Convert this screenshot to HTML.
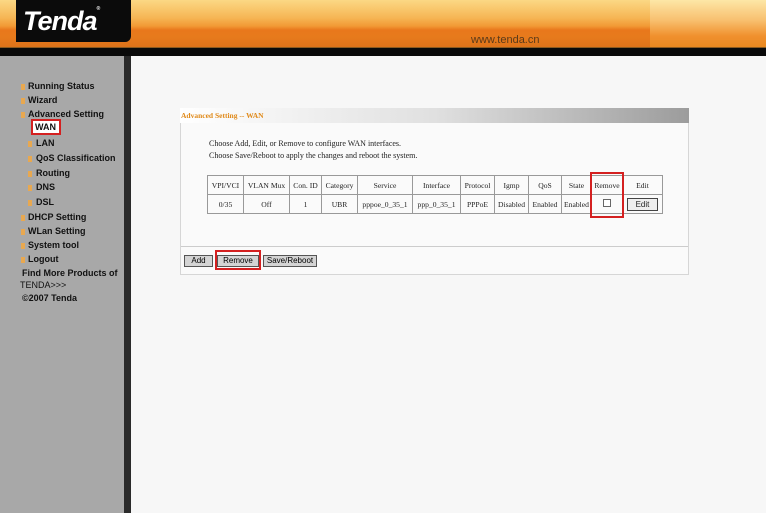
<!DOCTYPE html><html><head><style>
*{margin:0;padding:0;box-sizing:border-box}
body{width:766px;height:513px;overflow:hidden;background:#f7f7f7;font-family:"Liberation Serif",serif;position:relative}
.hdr{position:absolute;left:0;top:0;width:766px;height:56px;background:linear-gradient(#fbd884 0,#f6b554 18px,#f29a35 26px,#e9781c 30px,#e77a1c 66%,#d66d18 100%)}
.hdr2{position:absolute;left:650px;top:0;width:116px;height:48px;background:linear-gradient(#fde7a6 0,#f8c070 20px,#f0902e 36px,#e9881f 48px)}
.blk{position:absolute;left:0;top:47px;width:766px;height:9px;background:#0a0a0a;border-top:1px solid #8a5a20}
.logo{position:absolute;left:16px;top:0;width:115px;height:42px;background:#0b0b0b;border-radius:0 0 6px 0;color:#fff;font:italic bold 27px "Liberation Sans",sans-serif;letter-spacing:-1px;padding:6px 0 0 7px}
.url{position:absolute;left:471px;top:34px;font:11px "Liberation Sans",sans-serif;color:#5a3a1a}
.side{position:absolute;left:0;top:56px;width:124px;height:457px;background:#a8a8a8}
.bord{position:absolute;left:124px;top:56px;width:7px;height:457px;background:#2a2a2a}
.nav{position:absolute;font:bold 9px "Liberation Sans",sans-serif;color:#111;white-space:nowrap}
.dot{position:absolute;width:4px;height:6px;background:#e8a850}
.red{position:absolute;border:2px solid #d42020}
.panel{position:absolute;left:180px;top:108px;width:509px;height:167px;border:1px solid #d6d6d6;background:#fafafa}
.title{position:absolute;left:180px;top:108px;width:509px;height:15px;background:linear-gradient(90deg,#fff 0,#e0e0e0 50%,#9c9c9c 100%);font:bold 7.5px "Liberation Serif",serif;color:#e08a1a;padding:3px 0 0 1px}
.txt{position:absolute;left:209px;font-size:8px;color:#222}
table{position:absolute;left:207px;top:175px;border-collapse:collapse;font-size:7.6px;color:#222}
td{border:1px solid #999;text-align:center;padding:0;height:19px}
.btn{position:absolute;top:255px;height:12px;background:#d4d4d4;border:1px solid #555;font:8px "Liberation Sans",sans-serif;text-align:center;line-height:10px}
</style></head><body>
<div class="hdr"></div><div class="hdr2"></div><div class="blk"></div>
<div class="logo">Tenda<span style="font-size:5px;vertical-align:top">®</span></div>
<div class="url">www.tenda.cn</div>
<div class="side"></div><div class="bord"></div>
<div class="dot" style="left:21px;top:84px"></div><div class="nav" style="left:28px;top:81px">Running Status</div>
<div class="dot" style="left:21px;top:98px"></div><div class="nav" style="left:28px;top:95px">Wizard</div>
<div class="dot" style="left:21px;top:112px"></div><div class="nav" style="left:28px;top:109px">Advanced Setting</div>
<div class="red" style="left:31px;top:119px;width:30px;height:16px;background:#fff"></div><div class="nav" style="left:35px;top:122px">WAN</div>
<div class="dot" style="left:28px;top:141px"></div><div class="nav" style="left:36px;top:138px">LAN</div>
<div class="dot" style="left:28px;top:156px"></div><div class="nav" style="left:36px;top:153px">QoS Classification</div>
<div class="dot" style="left:28px;top:171px"></div><div class="nav" style="left:36px;top:168px">Routing</div>
<div class="dot" style="left:28px;top:185px"></div><div class="nav" style="left:36px;top:182px">DNS</div>
<div class="dot" style="left:28px;top:200px"></div><div class="nav" style="left:36px;top:197px">DSL</div>
<div class="dot" style="left:21px;top:215px"></div><div class="nav" style="left:28px;top:212px">DHCP Setting</div>
<div class="dot" style="left:21px;top:229px"></div><div class="nav" style="left:28px;top:226px">WLan Setting</div>
<div class="dot" style="left:21px;top:243px"></div><div class="nav" style="left:28px;top:240px">System tool</div>
<div class="dot" style="left:21px;top:257px"></div><div class="nav" style="left:28px;top:254px">Logout</div>
<div class="nav" style="left:22px;top:268px">Find More Products of</div>
<div class="nav" style="left:20px;top:280px;font-weight:normal">TENDA&gt;&gt;&gt;</div>
<div class="nav" style="left:22px;top:293px">©2007 Tenda</div>
<div class="panel"></div>
<div class="title">Advanced Setting -- WAN</div>
<div class="txt" style="top:139px">Choose Add, Edit, or Remove to configure WAN interfaces.</div>
<div class="txt" style="top:151px">Choose Save/Reboot to apply the changes and reboot the system.</div>
<table>
<tr><td style="width:36px">VPI/VCI</td><td style="width:46px">VLAN Mux</td><td style="width:32px">Con. ID</td><td style="width:36px">Category</td><td style="width:55px">Service</td><td style="width:48px">Interface</td><td style="width:34px">Protocol</td><td style="width:34px">Igmp</td><td style="width:33px">QoS</td><td style="width:30px">State</td><td style="width:31px">Remove</td><td style="width:40px">Edit</td></tr>
<tr><td>0/35</td><td>Off</td><td>1</td><td>UBR</td><td>pppoe_0_35_1</td><td>ppp_0_35_1</td><td>PPPoE</td><td>Disabled</td><td>Enabled</td><td>Enabled</td><td><span style="display:inline-block;width:8px;height:8px;border:1px solid #666;background:#fff"></span></td><td><span style="display:inline-block;width:31px;height:13px;border:1px solid #444;background:#eee;font:8px 'Liberation Sans',sans-serif;line-height:11px">Edit</span></td></tr>
</table>
<div class="red" style="left:590px;top:172px;width:34px;height:46px"></div>
<div style="position:absolute;left:181px;top:246px;width:507px;height:1px;background:#ccc"></div>
<div class="btn" style="left:184px;width:29px">Add</div>
<div class="btn" style="left:217px;width:42px">Remove</div>
<div class="btn" style="left:263px;width:54px">Save/Reboot</div>
<div class="red" style="left:215px;top:250px;width:46px;height:20px"></div>
</body></html>
